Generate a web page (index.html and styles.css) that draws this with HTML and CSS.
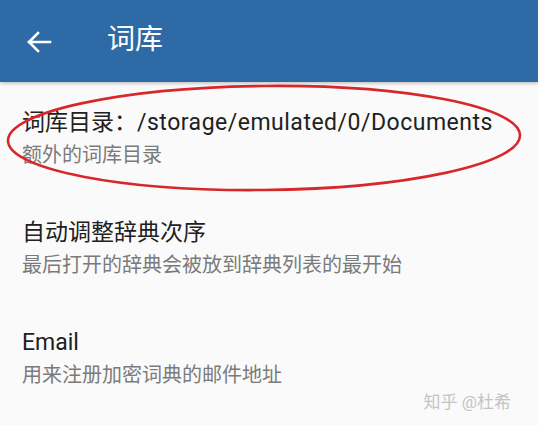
FILE: index.html
```html
<!DOCTYPE html>
<html lang="zh">
<head>
<meta charset="utf-8">
<link rel="stylesheet" href="styles.css">
</head>
<body>
<div class="screen">
  <header class="appbar">
    <svg class="back" width="26" height="22" viewBox="0 0 26 22">
      <path d="M24 11H3M12 2L3 11l9 9" fill="none" stroke="#fff" stroke-width="2.6" stroke-linecap="square"/>
    </svg>
    <h1 class="title">词库</h1>
  </header>
  <ul class="prefs">
    <li class="pref">
      <div class="pref-title">词库目录：<span class="path">/storage/emulated/0/Documents</span></div>
      <div class="pref-sub">额外的词库目录</div>
    </li>
    <li class="pref">
      <div class="pref-title">自动调整辞典次序</div>
      <div class="pref-sub">最后打开的辞典会被放到辞典列表的最开始</div>
    </li>
    <li class="pref">
      <div class="pref-title">Email</div>
      <div class="pref-sub">用来注册加密词典的邮件地址</div>
    </li>
  </ul>
  <svg class="circle" width="538" height="425" viewBox="0 0 538 425">
    <ellipse cx="264" cy="138" rx="256" ry="52" transform="rotate(-0.6 264 138)" fill="none" stroke="#d8272a" stroke-width="2.6"/>
  </svg>
  <div class="watermark">知乎 @杜希</div>
</div>
</body>
</html>
```
FILE: styles.css
```css
html, body {
  margin: 0;
  padding: 0;
  background: #fafafa;
}
.screen {
  position: relative;
  width: 538px;
  height: 425px;
  overflow: hidden;
  background: #fafafa;
  font-family: Roboto, "Noto Sans CJK SC", sans-serif;
}
.appbar {
  height: 82px;
  background: #2e6ba6;
  display: flex;
  align-items: center;
  box-shadow: 0 1px 4px rgba(0,0,0,0.28);
  position: relative;
  z-index: 1;
}
.back {
  margin-left: 26px;
  margin-top: 2px;
  flex: none;
}
.title {
  margin: 0 0 0 55px;
  font-size: 28px;
  font-weight: 400;
  color: #fff;
  line-height: 1;
  margin-top: -2px;
}
.prefs {
  list-style: none;
  margin: 0;
  padding: 2px 0 0 0;
}
.pref {
  height: 110px;
  box-sizing: border-box;
  padding: 23px 22px;
}
.pref-title {
  font-size: 23px;
  line-height: 32px;
  color: #212121;
  white-space: nowrap;
}
.path {
  letter-spacing: 0.5px;
}
.pref-sub {
  font-size: 20px;
  line-height: 32px;
  color: #7a7a7a;
  white-space: nowrap;
}
.circle {
  position: absolute;
  left: 0;
  top: 0;
  z-index: 2;
  pointer-events: none;
}
.watermark {
  position: absolute;
  right: 27px;
  top: 390px;
  font-size: 17px;
  line-height: 24px;
  color: #c4c4c4;
}
```
